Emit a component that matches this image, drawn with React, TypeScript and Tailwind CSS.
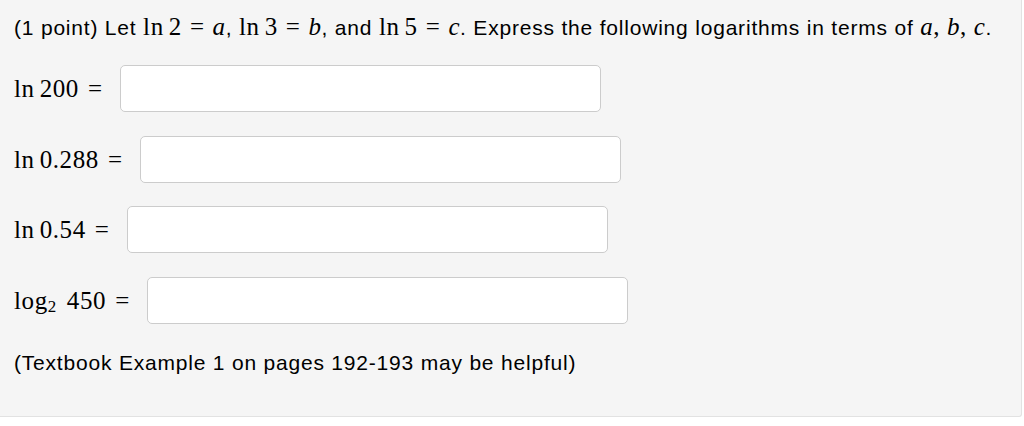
import React from "react";

const serif = "font-['Liberation_Serif','Times_New_Roman',serif] tracking-[0.6px]";

const M = ({ children }: { children: React.ReactNode }) => (
  <span className={`${serif} text-[25px]`}>{children}</span>
);

const Eq = ({ last }: { last?: boolean }) => (
  <span className={last ? "ml-[9px]" : "mx-[8px]"}>=</span>
);

const Ln = ({ n }: { n: string }) => (
  <>
    ln<span className="ml-[5px]">{n}</span>
  </>
);

const Row = ({ label }: { label: React.ReactNode }) => (
  <div className="flex items-center">
    <span className={`${serif} text-[25px] leading-none text-black whitespace-nowrap`}>
      {label}
      <Eq last />
    </span>
    <input
      type="text"
      className="ml-[17px] w-[481px] h-[47px] rounded-[5px] border border-[#cccccc] bg-white outline-none"
    />
  </div>
);

export default function App() {
  return (
    <div className="w-[1022px] h-[417px] bg-[#f5f5f5] border-r border-b border-[#e2e2e2] rounded-br-[3px] pl-[14px] pt-[14px] text-black font-['Liberation_Sans',Arial,sans-serif] text-[21px] tracking-[0.8px]">
      <p className="leading-[26px] whitespace-nowrap">
        (1 point) Let{" "}
        <M>
          <Ln n="2" />
          <Eq />
          <i>a</i>
        </M>
        ,{" "}
        <M>
          <Ln n="3" />
          <Eq />
          <i>b</i>
        </M>
        , and{" "}
        <M>
          <Ln n="5" />
          <Eq />
          <i>c</i>
        </M>
        . Express the following logarithms in terms of{" "}
        <M>
          <i>a</i>, <i>b</i>, <i>c</i>
        </M>
        .
      </p>

      <div className="mt-[24px] flex flex-col gap-[23.7px]">
        <Row label={<Ln n="200" />} />
        <Row label={<Ln n="0.288" />} />
        <Row label={<Ln n="0.54" />} />
        <Row
          label={
            <>
              log<sub className="text-[17px] relative top-[3px]">2</sub>
              <span className="ml-[10px]">450</span>
            </>
          }
        />
      </div>

      <p className="mt-[26px] leading-[26px]">(Textbook Example 1 on pages 192-193 may be helpful)</p>
    </div>
  );
}
